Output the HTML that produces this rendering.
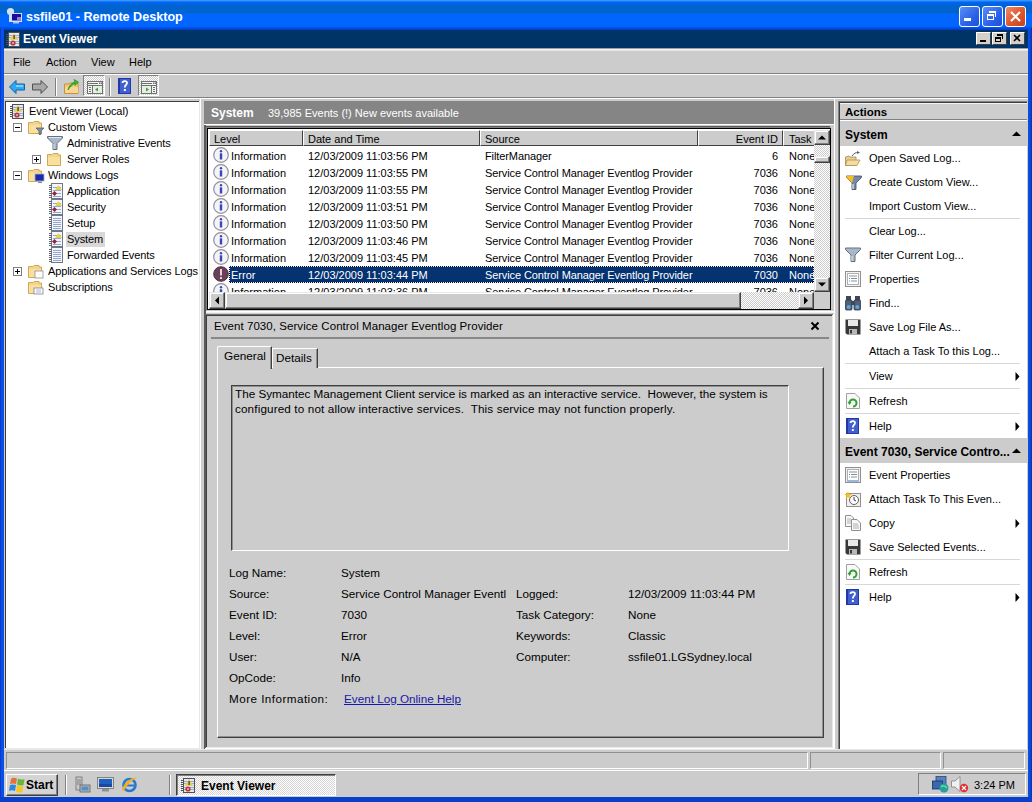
<!DOCTYPE html>
<html><head><meta charset="utf-8">
<style>
*{box-sizing:border-box;margin:0;padding:0}
html,body{width:1032px;height:802px;overflow:hidden;background:#0A4BD8;font-family:"Liberation Sans",sans-serif;font-size:11px;color:#000}
.a{position:absolute}
.t{position:absolute;white-space:pre;line-height:13px}
svg{position:absolute;overflow:visible}
.hl{position:absolute;height:1px}
.vl{position:absolute;width:1px}
</style></head><body>
<div class="a" style="left:0;top:0;width:1032px;height:802px;overflow:hidden">
<!-- XP title bar -->
<div class="a" style="left:0;top:0;width:1032px;height:30px;background:linear-gradient(#48A0FF 0,#2C8CFF 1px,#0066F4 2px,#0060E8 4px,#0064CC 6px,#0064CC 13px,#0066FF 14px,#0066FF 26px,#0050E8 28px,#0838C0 30px)"></div>
<svg style="left:0px;top:0px" width="24" height="26" viewBox="0 0 24 26">
 <circle cx="10.5" cy="11.5" r="3.6" fill="#E8F0F8" opacity=".9"/>
 <rect x="9" y="13" width="13" height="9" fill="#D0DCF4"/>
 <rect x="12" y="14" width="9" height="6.5" fill="#180C98"/>
 <rect x="17" y="17" width="4" height="3.5" fill="#9080E0"/>
 <rect x="13" y="22" width="6" height="1.5" fill="#A8C0F0"/>
</svg>
<div class="t" style="left:26px;top:10px;font-size:12.6px;font-weight:bold;color:#fff;line-height:15px;letter-spacing:0px">ssfile01 - Remote Desktop</div>
<!-- XP buttons -->
<div class="a" style="left:959px;top:6px;width:21px;height:21px;border:1px solid #fff;border-radius:3px;background:linear-gradient(135deg,#5C8EF8,#2B62E8 60%,#1C50D8)"></div>
<div class="a" style="left:964px;top:18px;width:7px;height:3px;background:#fff"></div>
<div class="a" style="left:982px;top:6px;width:21px;height:21px;border:1px solid #fff;border-radius:3px;background:linear-gradient(135deg,#5C8EF8,#2B62E8 60%,#1C50D8)"></div>
<div class="a" style="left:987px;top:14px;width:7px;height:6px;border:1px solid #fff;border-top-width:2px"></div>
<div class="a" style="left:989px;top:11px;width:7px;height:6px;border:1px solid #fff;border-top-width:2px;border-left:none;border-bottom:none"></div>
<div class="a" style="left:1005px;top:6px;width:21px;height:21px;border:1px solid #fff;border-radius:3px;background:linear-gradient(135deg,#F08A6A,#E05A30 50%,#C8401C)"></div>
<svg style="left:1005px;top:6px" width="21" height="21"><path d="M6 6 L15 15 M15 6 L6 15" stroke="#fff" stroke-width="2.2"/></svg>

<!-- frame borders -->
<div class="a" style="left:0;top:28px;width:4px;height:774px;background:linear-gradient(90deg,#0830B0,#0A50E8 30%,#0A50E8)"></div>
<div class="a" style="left:1028px;top:28px;width:4px;height:774px;background:linear-gradient(90deg,#0A50E8,#0A48D8 50%,#0830A8)"></div>
<div class="a" style="left:0;top:797px;width:1032px;height:5px;background:#0A3FCC"></div>

<!-- MDI title -->
<div class="a" style="left:4px;top:30px;width:1024px;height:18px;background:#003366"></div>
<svg style="left:5px;top:31px" width="15" height="16" viewBox="0 0 15 16">
 <rect x="3.5" y="1.5" width="11" height="14" fill="#E4E8F4" stroke="#505050" stroke-width="1"/>
 <path d="M1 3.5h3M1 5.5h3M1 7.5h3M1 9.5h3M1 11.5h3M1 13.5h3" stroke="#505050" stroke-width="1"/>
 <path d="M4 4.5h10M4 6.5h10M4 10.5h10M4 12.5h10" stroke="#98A8D0" stroke-width="1"/>
 <path d="M9 2 L13.5 9 L4.5 9 Z" fill="#E0D068"/>
 <rect x="8.5" y="4" width="1.2" height="4" fill="#303020"/>
 <circle cx="8" cy="12" r="2.6" fill="#B83838"/>
 <circle cx="8" cy="12" r="1" fill="#F0B0B0"/>
</svg>
<div class="t" style="left:23px;top:32px;font-size:12px;font-weight:bold;color:#fff;line-height:14px">Event Viewer</div>
<!-- MDI buttons -->
<div class="a" style="left:976px;top:32px;width:15px;height:13px;background:#D4D0C8;border:1px solid;border-color:#fff #404040 #404040 #fff"></div>
<div class="a" style="left:980px;top:40px;width:6px;height:2px;background:#000"></div>
<div class="a" style="left:992px;top:32px;width:15px;height:13px;background:#D4D0C8;border:1px solid;border-color:#fff #404040 #404040 #fff"></div>
<div class="a" style="left:995px;top:37px;width:6px;height:5px;border:1px solid #000;border-top-width:2px"></div>
<div class="a" style="left:997px;top:34px;width:6px;height:5px;border:1px solid #000;border-top-width:2px;border-left:none;border-bottom:none"></div>
<div class="a" style="left:1010px;top:32px;width:15px;height:13px;background:#D4D0C8;border:1px solid;border-color:#fff #404040 #404040 #fff"></div>
<svg style="left:1010px;top:32px" width="15" height="13"><path d="M4 3 L10 9 M10 3 L4 9" stroke="#000" stroke-width="1.6"/></svg>

<!-- main gray -->
<div class="a" style="left:4px;top:48px;width:1024px;height:749px;background:#CCCCCC"></div>
<div class="hl" style="left:4px;top:48px;width:1024px;background:#A0A0A0"></div>
<div class="hl" style="left:4px;top:49px;width:1024px;background:#F4F4F4"></div>
<div class="hl" style="left:4px;top:50px;width:1024px;background:#E4E4E4"></div>
<!-- menu -->
<div class="t" style="left:13px;top:56px">File</div>
<div class="t" style="left:46px;top:56px">Action</div>
<div class="t" style="left:91px;top:56px">View</div>
<div class="t" style="left:129px;top:56px">Help</div>
<div class="hl" style="left:4px;top:73px;width:1024px;background:#808080"></div>
<div class="hl" style="left:4px;top:74px;width:1024px;background:#FFFFFF"></div>
<div class="hl" style="left:4px;top:97px;width:1024px;background:#808080"></div>
<div class="hl" style="left:4px;top:98px;width:1024px;background:#FFFFFF"></div>
<!-- toolbar icons -->
<svg style="left:9px;top:80px" width="16" height="14" viewBox="0 0 16 14">
 <path d="M0.5 7 L7 0.5 L7 4 L15.5 4 L15.5 10 L7 10 L7 13.5 Z" fill="#30A8F0" stroke="#1060B0" stroke-width="1"/>
 <path d="M7 5 L14 5 L14 7 L7 7Z" fill="#80D0FF"/>
</svg>
<svg style="left:32px;top:80px" width="16" height="14" viewBox="0 0 16 14">
 <path d="M15.5 7 L9 0.5 L9 4 L0.5 4 L0.5 10 L9 10 L9 13.5 Z" fill="#A8A8A8" stroke="#505050" stroke-width="1"/>
</svg>
<div class="vl" style="left:55px;top:78px;height:18px;background:#808080"></div>
<div class="vl" style="left:56px;top:78px;height:18px;background:#fff"></div>
<svg style="left:64px;top:79px" width="15" height="15" viewBox="0 0 15 15">
 <path d="M0.5 5 L5 5 L6 4 L14 4 L14 14.5 L0.5 14.5 Z" fill="#F4C878" stroke="#C89040" stroke-width="1"/>
 <path d="M1 8 L14 8 L14 14 L1 14Z" fill="#F8D890"/>
 <path d="M4 11 C5 6 8 4 11 3 L10 0.5 L14.5 3 L11 6.5 L11 4.5 C8 5.5 6 8 4 11Z" fill="#30C030" stroke="#108010" stroke-width=".6"/>
</svg>
<!-- pressed button 1 -->
<div class="a" style="left:83px;top:75px;width:22px;height:21px;border:1px solid;border-color:#808080 #fff #fff #808080;background-color:#E8E8E8;background-image:repeating-conic-gradient(#FFFFFF 0 25%,#CCCCCC 0 50%);background-size:2px 2px"></div>
<svg style="left:87px;top:81px" width="16" height="13" viewBox="0 0 16 13">
 <rect x="0.5" y="0.5" width="15" height="12" fill="#F4F4F4" stroke="#707070"/>
 <path d="M1 2.5h10" stroke="#707070" stroke-width="1"/>
 <rect x="12" y="1.5" width="1.5" height="1.5" fill="#707070"/><rect x="14" y="1.5" width="1" height="1.5" fill="#707070"/>
 <path d="M1 4.5h14" stroke="#707070"/>
 <path d="M5.5 4.5v8" stroke="#707070"/>
 <path d="M2 6.5h2M2 8.5h2M2 10.5h2" stroke="#707070"/>
 <rect x="6" y="5" width="9" height="7" fill="#E4F0E0"/>
 <path d="M11 6.5 L8 8.5 L11 10.5Z" fill="#40A040"/>
</svg>
<div class="vl" style="left:109px;top:78px;height:18px;background:#808080"></div>
<div class="vl" style="left:110px;top:78px;height:18px;background:#fff"></div>
<svg style="left:118px;top:78px" width="13" height="16" viewBox="0 0 13 16">
 <rect x="0" y="0" width="13" height="16" fill="#2038A8"/>
 <rect x="2" y="1" width="10" height="14" fill="#4060D0"/>
 <path d="M4.5 5 C4.5 2.5 9 2.5 9 5 C9 7 6.8 7 6.8 9.5" stroke="#fff" stroke-width="1.8" fill="none"/>
 <rect x="5.9" y="11" width="1.9" height="2" fill="#fff"/>
</svg>
<div class="a" style="left:138px;top:75px;width:21px;height:21px;border:1px solid;border-color:#808080 #fff #fff #808080;background-color:#E8E8E8;background-image:repeating-conic-gradient(#FFFFFF 0 25%,#CCCCCC 0 50%);background-size:2px 2px"></div>
<svg style="left:141px;top:81px" width="16" height="13" viewBox="0 0 16 13">
 <rect x="0.5" y="0.5" width="15" height="12" fill="#F4F4F4" stroke="#707070"/>
 <path d="M1 2.5h10" stroke="#707070" stroke-width="1"/>
 <rect x="12" y="1.5" width="1.5" height="1.5" fill="#707070"/><rect x="14" y="1.5" width="1" height="1.5" fill="#707070"/>
 <path d="M1 4.5h14" stroke="#707070"/>
 <path d="M10.5 4.5v8" stroke="#707070"/>
 <path d="M12 6.5h2M12 8.5h2M12 10.5h2" stroke="#707070"/>
 <rect x="1" y="5" width="9" height="7" fill="#E4F0E0"/>
 <path d="M5 6.5 L8 8.5 L5 10.5Z" fill="#40A040"/>
</svg>
<div class="a" style="left:5px;top:101px;width:195px;height:648px;background:#fff"></div>
<div class="hl" style="left:5px;top:101px;width:195px;background:#404040"></div>
<div class="vl" style="left:5px;top:101px;height:648px;background:#404040"></div>
<div class="hl" style="left:5px;top:748px;width:195px;background:#E8E8E8"></div>
<div class="vl" style="left:199px;top:101px;height:648px;background:#E8E8E8"></div>
<svg style="left:9px;top:103px" width="15" height="16" viewBox="0 0 15 16">
 <rect x="3.5" y="1.5" width="11" height="14" fill="#E4E8F4" stroke="#505050" stroke-width="1"/>
 <path d="M1 3.5h3M1 5.5h3M1 7.5h3M1 9.5h3M1 11.5h3M1 13.5h3" stroke="#505050" stroke-width="1"/>
 <path d="M4 4.5h10M4 6.5h10M4 10.5h10M4 12.5h10" stroke="#98A8D0" stroke-width="1"/>
 <path d="M9 2 L13.5 9 L4.5 9 Z" fill="#E0D068"/>
 <rect x="8.5" y="4" width="1.2" height="4" fill="#303020"/>
 <circle cx="8" cy="12" r="2.6" fill="#B83838"/>
 <circle cx="8" cy="12" r="1" fill="#F0B0B0"/>
</svg>
<div class="t" style="left:29px;top:105px;letter-spacing:-0.1px">Event Viewer (Local)</div>
<svg style="left:28px;top:119px" width="16" height="16" viewBox="0 0 16 16">
 <path d="M0.5 3.5 L5 3.5 L6 2.5 L11 2.5 L11 4 L13.5 4 L13.5 14.5 L0.5 14.5Z" fill="#F2D690" stroke="#D0A850" stroke-width="1"/>
 <path d="M1 6 L13 6 L13 14 L1 14Z" fill="#F8E0A0"/>
 <path d="M8 9 L16 9 L13 12 L13 15.5 L11 15.5 L11 12Z" fill="#8090A8" stroke="#506078" stroke-width=".8"/>
</svg>
<div class="a" style="left:13px;top:123px;width:9px;height:9px;border:1px solid #808080;background:#fff"></div><div class="hl" style="left:15px;top:127px;width:5px;background:#000"></div>
<div class="t" style="left:48px;top:121px;letter-spacing:-0.1px">Custom Views</div>
<svg style="left:47px;top:135px" width="16" height="16" viewBox="0 0 16 16">
 <path d="M0.5 1.5 L15.5 1.5 L15.5 3 L10 8.5 L10 14.5 L6 14.5 L6 8.5 L0.5 3Z" fill="#A8B8C8" stroke="#607080" stroke-width="1"/>
 <path d="M2 2.5 L14 2.5" stroke="#E0E8F0" stroke-width="1"/>
 <path d="M7 9 L7 14" stroke="#D8E0E8" stroke-width="1"/>
</svg>
<div class="t" style="left:67px;top:137px;letter-spacing:-0.1px">Administrative Events</div>
<svg style="left:47px;top:151px" width="16" height="16" viewBox="0 0 16 16">
 <path d="M0.5 3.5 L5 3.5 L6 2.5 L11 2.5 L11 4 L13.5 4 L13.5 14.5 L0.5 14.5Z" fill="#F2D690" stroke="#D0A850" stroke-width="1"/>
 <path d="M1 6 L13 6 L13 14 L1 14Z" fill="#F8E0A0"/>
 
</svg>
<div class="a" style="left:32px;top:155px;width:9px;height:9px;border:1px solid #808080;background:#fff"></div><div class="hl" style="left:34px;top:159px;width:5px;background:#000"></div><div class="vl" style="left:36px;top:157px;height:5px;background:#000"></div>
<div class="t" style="left:67px;top:153px;letter-spacing:-0.1px">Server Roles</div>
<svg style="left:28px;top:167px" width="16" height="16" viewBox="0 0 16 16">
 <path d="M0.5 3.5 L5 3.5 L6 2.5 L11 2.5 L11 4 L13.5 4 L13.5 14.5 L0.5 14.5Z" fill="#F2D690" stroke="#D0A850" stroke-width="1"/>
 <path d="M1 6 L13 6 L13 14 L1 14Z" fill="#F8E0A0"/>
 <rect x="7" y="7" width="9" height="7" fill="#1A2AB0" stroke="#A0B0D0" stroke-width=".8"/><path d="M10 15.5h4" stroke="#8090B0"/>
</svg>
<div class="a" style="left:13px;top:171px;width:9px;height:9px;border:1px solid #808080;background:#fff"></div><div class="hl" style="left:15px;top:175px;width:5px;background:#000"></div>
<div class="t" style="left:48px;top:169px;letter-spacing:-0.1px">Windows Logs</div>
<svg style="left:48px;top:183px" width="15" height="16" viewBox="0 0 15 16">
 <rect x="3.5" y="0.5" width="11" height="15" fill="#F4F6FC" stroke="#707888" stroke-width="1"/>
 <path d="M1 2.5h3M1 4.5h3M1 6.5h3M1 8.5h3M1 10.5h3M1 12.5h3M1 14.5h3" stroke="#606070" stroke-width="1"/>
 <path d="M5 4.5h8M5 7.5h8M5 10.5h8M5 13.5h8" stroke="#90A8D0" stroke-width="1"/>
 <path d="M10.5 2 L14 7 L7 7Z" fill="#E8D050"/>
 <path d="M6.5 8 L9 10.5 L6.5 13 L4 10.5Z" fill="#902838"/>
</svg>
<div class="t" style="left:67px;top:185px;letter-spacing:-0.1px">Application</div>
<svg style="left:48px;top:199px" width="15" height="16" viewBox="0 0 15 16">
 <rect x="3.5" y="0.5" width="11" height="15" fill="#F4F6FC" stroke="#707888" stroke-width="1"/>
 <path d="M1 2.5h3M1 4.5h3M1 6.5h3M1 8.5h3M1 10.5h3M1 12.5h3M1 14.5h3" stroke="#606070" stroke-width="1"/>
 <path d="M5 4.5h8M5 7.5h8M5 10.5h8M5 13.5h8" stroke="#90A8D0" stroke-width="1"/>
 <path d="M10.5 2 L14 7 L7 7Z" fill="#E8D050"/>
 <path d="M6.5 8 L9 10.5 L6.5 13 L4 10.5Z" fill="#902838"/>
</svg>
<div class="t" style="left:67px;top:201px;letter-spacing:-0.1px">Security</div>
<svg style="left:48px;top:215px" width="15" height="16" viewBox="0 0 15 16">
 <rect x="3.5" y="0.5" width="11" height="15" fill="#F4F6FC" stroke="#707888" stroke-width="1"/>
 <path d="M1 2.5h3M1 4.5h3M1 6.5h3M1 8.5h3M1 10.5h3M1 12.5h3M1 14.5h3" stroke="#606070" stroke-width="1"/>
 <path d="M5 3.5h8M5 5.5h8M5 7.5h8M5 9.5h8M5 11.5h8M5 13.5h8" stroke="#90A8D0" stroke-width="1"/>
</svg>
<div class="t" style="left:67px;top:217px;letter-spacing:-0.1px">Setup</div>
<div class="a" style="left:66px;top:232px;width:39px;height:15px;background:#D8D8D8"></div>
<svg style="left:48px;top:231px" width="15" height="16" viewBox="0 0 15 16">
 <rect x="3.5" y="0.5" width="11" height="15" fill="#F4F6FC" stroke="#707888" stroke-width="1"/>
 <path d="M1 2.5h3M1 4.5h3M1 6.5h3M1 8.5h3M1 10.5h3M1 12.5h3M1 14.5h3" stroke="#606070" stroke-width="1"/>
 <path d="M5 4.5h8M5 7.5h8M5 10.5h8M5 13.5h8" stroke="#90A8D0" stroke-width="1"/>
 <path d="M10.5 2 L14 7 L7 7Z" fill="#E8D050"/>
 <path d="M6.5 8 L9 10.5 L6.5 13 L4 10.5Z" fill="#902838"/>
</svg>
<div class="t" style="left:67px;top:233px;letter-spacing:-0.1px">System</div>
<svg style="left:48px;top:247px" width="15" height="16" viewBox="0 0 15 16">
 <rect x="3.5" y="0.5" width="11" height="15" fill="#F4F6FC" stroke="#707888" stroke-width="1"/>
 <path d="M1 2.5h3M1 4.5h3M1 6.5h3M1 8.5h3M1 10.5h3M1 12.5h3M1 14.5h3" stroke="#606070" stroke-width="1"/>
 <path d="M5 3.5h8M5 5.5h8M5 7.5h8M5 9.5h8M5 11.5h8M5 13.5h8" stroke="#90A8D0" stroke-width="1"/>
</svg>
<div class="t" style="left:67px;top:249px;letter-spacing:-0.1px">Forwarded Events</div>
<svg style="left:28px;top:263px" width="16" height="16" viewBox="0 0 16 16">
 <path d="M0.5 3.5 L5 3.5 L6 2.5 L11 2.5 L11 4 L13.5 4 L13.5 14.5 L0.5 14.5Z" fill="#F2D690" stroke="#D0A850" stroke-width="1"/>
 <path d="M1 6 L13 6 L13 14 L1 14Z" fill="#F8E0A0"/>
 <rect x="7" y="8" width="8" height="7" fill="#fff" stroke="#909090" stroke-width=".8"/>
</svg>
<div class="a" style="left:13px;top:267px;width:9px;height:9px;border:1px solid #808080;background:#fff"></div><div class="hl" style="left:15px;top:271px;width:5px;background:#000"></div><div class="vl" style="left:17px;top:269px;height:5px;background:#000"></div>
<div class="t" style="left:48px;top:265px;letter-spacing:-0.1px">Applications and Services Logs</div>
<svg style="left:28px;top:279px" width="16" height="16" viewBox="0 0 16 16">
 <path d="M0.5 3.5 L5 3.5 L6 2.5 L11 2.5 L11 4 L13.5 4 L13.5 14.5 L0.5 14.5Z" fill="#F2D690" stroke="#D0A850" stroke-width="1"/>
 <path d="M1 6 L13 6 L13 14 L1 14Z" fill="#F8E0A0"/>
 <rect x="6" y="9" width="9" height="6" fill="#fff" stroke="#8080A0" stroke-width=".8"/><path d="M8 11h5M8 13h5" stroke="#8080A0" stroke-width=".6"/>
</svg>
<div class="t" style="left:48px;top:281px;letter-spacing:-0.1px">Subscriptions</div>
<div class="vl" style="left:200px;top:99px;height:650px;background:#FFFFFF"></div>
<div class="a" style="left:204px;top:101px;width:630px;height:23px;background:#858585"></div>
<div class="t" style="left:211px;top:107px;font-size:12px;font-weight:bold;color:#fff;line-height:13px">System</div>
<div class="t" style="left:268px;top:107px;color:#fff">39,985 Events (!) New events available</div>
<div class="hl" style="left:204px;top:124px;width:630px;background:#FFFFFF"></div>
<div class="a" style="left:206px;top:127px;width:625px;height:184px;border:1px solid;border-color:#808080 transparent transparent #808080"></div>
<div class="a" style="left:207px;top:128px;width:624px;height:182px;background:#fff;border:1px solid #000"></div>
<div class="a" style="left:209px;top:130px;width:94px;height:16px;background:#CCCCCC;border:1px solid;border-color:#fff #404040 #404040 #fff;overflow:hidden"></div>
<div class="t" style="left:214px;top:133px;max-width:88px;overflow:hidden">Level</div>
<div class="a" style="left:303px;top:130px;width:177px;height:16px;background:#CCCCCC;border:1px solid;border-color:#fff #404040 #404040 #fff;overflow:hidden"></div>
<div class="t" style="left:308px;top:133px;max-width:171px;overflow:hidden">Date and Time</div>
<div class="a" style="left:480px;top:130px;width:218px;height:16px;background:#CCCCCC;border:1px solid;border-color:#fff #404040 #404040 #fff;overflow:hidden"></div>
<div class="t" style="left:485px;top:133px;max-width:212px;overflow:hidden">Source</div>
<div class="a" style="left:698px;top:130px;width:85px;height:16px;background:#CCCCCC;border:1px solid;border-color:#fff #404040 #404040 #fff;overflow:hidden"></div>
<div class="t" style="left:698px;top:133px;width:80px;text-align:right">Event ID</div>
<div class="a" style="left:783px;top:130px;width:32px;height:16px;background:#CCCCCC;border:1px solid;border-color:#fff #404040 #404040 #fff;overflow:hidden"></div>
<div class="t" style="left:789px;top:133px;max-width:25px;overflow:hidden">Task</div>
<div class="a" style="left:209px;top:147px;width:605px;height:145px;overflow:hidden">
<svg style="left:4px;top:0px" width="16" height="16" viewBox="0 0 16 16">
 <circle cx="8" cy="8" r="7.3" fill="#F4F4F8" stroke="#909098" stroke-width="1.2"/>
 <circle cx="8" cy="4.3" r="1.2" fill="#3848B0"/>
 <rect x="6.8" y="6.3" width="2.4" height="6.2" fill="#3848B0"/>
</svg>
<div class="t" style="left:22px;top:3px;color:#000">Information</div>
<div class="t" style="left:99px;top:3px;color:#000">12/03/2009 11:03:56 PM</div>
<div class="t" style="left:276px;top:3px;color:#000;letter-spacing:-0.1px">FilterManager</div>
<div class="t" style="left:489px;top:3px;width:80px;text-align:right;color:#000">6</div>
<div class="t" style="left:580px;top:3px;width:25px;overflow:hidden;color:#000">None</div>
<svg style="left:4px;top:17px" width="16" height="16" viewBox="0 0 16 16">
 <circle cx="8" cy="8" r="7.3" fill="#F4F4F8" stroke="#909098" stroke-width="1.2"/>
 <circle cx="8" cy="4.3" r="1.2" fill="#3848B0"/>
 <rect x="6.8" y="6.3" width="2.4" height="6.2" fill="#3848B0"/>
</svg>
<div class="t" style="left:22px;top:20px;color:#000">Information</div>
<div class="t" style="left:99px;top:20px;color:#000">12/03/2009 11:03:55 PM</div>
<div class="t" style="left:276px;top:20px;color:#000;letter-spacing:-0.1px">Service Control Manager Eventlog Provider</div>
<div class="t" style="left:489px;top:20px;width:80px;text-align:right;color:#000">7036</div>
<div class="t" style="left:580px;top:20px;width:25px;overflow:hidden;color:#000">None</div>
<svg style="left:4px;top:34px" width="16" height="16" viewBox="0 0 16 16">
 <circle cx="8" cy="8" r="7.3" fill="#F4F4F8" stroke="#909098" stroke-width="1.2"/>
 <circle cx="8" cy="4.3" r="1.2" fill="#3848B0"/>
 <rect x="6.8" y="6.3" width="2.4" height="6.2" fill="#3848B0"/>
</svg>
<div class="t" style="left:22px;top:37px;color:#000">Information</div>
<div class="t" style="left:99px;top:37px;color:#000">12/03/2009 11:03:55 PM</div>
<div class="t" style="left:276px;top:37px;color:#000;letter-spacing:-0.1px">Service Control Manager Eventlog Provider</div>
<div class="t" style="left:489px;top:37px;width:80px;text-align:right;color:#000">7036</div>
<div class="t" style="left:580px;top:37px;width:25px;overflow:hidden;color:#000">None</div>
<svg style="left:4px;top:51px" width="16" height="16" viewBox="0 0 16 16">
 <circle cx="8" cy="8" r="7.3" fill="#F4F4F8" stroke="#909098" stroke-width="1.2"/>
 <circle cx="8" cy="4.3" r="1.2" fill="#3848B0"/>
 <rect x="6.8" y="6.3" width="2.4" height="6.2" fill="#3848B0"/>
</svg>
<div class="t" style="left:22px;top:54px;color:#000">Information</div>
<div class="t" style="left:99px;top:54px;color:#000">12/03/2009 11:03:51 PM</div>
<div class="t" style="left:276px;top:54px;color:#000;letter-spacing:-0.1px">Service Control Manager Eventlog Provider</div>
<div class="t" style="left:489px;top:54px;width:80px;text-align:right;color:#000">7036</div>
<div class="t" style="left:580px;top:54px;width:25px;overflow:hidden;color:#000">None</div>
<svg style="left:4px;top:68px" width="16" height="16" viewBox="0 0 16 16">
 <circle cx="8" cy="8" r="7.3" fill="#F4F4F8" stroke="#909098" stroke-width="1.2"/>
 <circle cx="8" cy="4.3" r="1.2" fill="#3848B0"/>
 <rect x="6.8" y="6.3" width="2.4" height="6.2" fill="#3848B0"/>
</svg>
<div class="t" style="left:22px;top:71px;color:#000">Information</div>
<div class="t" style="left:99px;top:71px;color:#000">12/03/2009 11:03:50 PM</div>
<div class="t" style="left:276px;top:71px;color:#000;letter-spacing:-0.1px">Service Control Manager Eventlog Provider</div>
<div class="t" style="left:489px;top:71px;width:80px;text-align:right;color:#000">7036</div>
<div class="t" style="left:580px;top:71px;width:25px;overflow:hidden;color:#000">None</div>
<svg style="left:4px;top:85px" width="16" height="16" viewBox="0 0 16 16">
 <circle cx="8" cy="8" r="7.3" fill="#F4F4F8" stroke="#909098" stroke-width="1.2"/>
 <circle cx="8" cy="4.3" r="1.2" fill="#3848B0"/>
 <rect x="6.8" y="6.3" width="2.4" height="6.2" fill="#3848B0"/>
</svg>
<div class="t" style="left:22px;top:88px;color:#000">Information</div>
<div class="t" style="left:99px;top:88px;color:#000">12/03/2009 11:03:46 PM</div>
<div class="t" style="left:276px;top:88px;color:#000;letter-spacing:-0.1px">Service Control Manager Eventlog Provider</div>
<div class="t" style="left:489px;top:88px;width:80px;text-align:right;color:#000">7036</div>
<div class="t" style="left:580px;top:88px;width:25px;overflow:hidden;color:#000">None</div>
<svg style="left:4px;top:102px" width="16" height="16" viewBox="0 0 16 16">
 <circle cx="8" cy="8" r="7.3" fill="#F4F4F8" stroke="#909098" stroke-width="1.2"/>
 <circle cx="8" cy="4.3" r="1.2" fill="#3848B0"/>
 <rect x="6.8" y="6.3" width="2.4" height="6.2" fill="#3848B0"/>
</svg>
<div class="t" style="left:22px;top:105px;color:#000">Information</div>
<div class="t" style="left:99px;top:105px;color:#000">12/03/2009 11:03:45 PM</div>
<div class="t" style="left:276px;top:105px;color:#000;letter-spacing:-0.1px">Service Control Manager Eventlog Provider</div>
<div class="t" style="left:489px;top:105px;width:80px;text-align:right;color:#000">7036</div>
<div class="t" style="left:580px;top:105px;width:25px;overflow:hidden;color:#000">None</div>
<div class="a" style="left:20px;top:119px;width:585px;height:17px;background:#053372;border:1px solid #000A28"></div>
<div class="a" style="left:20px;top:119px;width:585px;height:17px;border:1px dotted #F0F0F0"></div>
<svg style="left:4px;top:119px" width="16" height="16" viewBox="0 0 16 16">
 <circle cx="8" cy="8" r="7.3" fill="#684058" stroke="#503040" stroke-width="1"/>
 <rect x="7" y="3" width="2" height="6.5" fill="#F0D0D8"/>
 <rect x="7" y="11" width="2" height="2" fill="#F0D0D8"/>
</svg>
<div class="t" style="left:22px;top:122px;color:#fff">Error</div>
<div class="t" style="left:99px;top:122px;color:#fff">12/03/2009 11:03:44 PM</div>
<div class="t" style="left:276px;top:122px;color:#fff;letter-spacing:-0.1px">Service Control Manager Eventlog Provider</div>
<div class="t" style="left:489px;top:122px;width:80px;text-align:right;color:#fff">7030</div>
<div class="t" style="left:580px;top:122px;width:25px;overflow:hidden;color:#fff">None</div>
<svg style="left:4px;top:136px" width="16" height="16" viewBox="0 0 16 16">
 <circle cx="8" cy="8" r="7.3" fill="#F4F4F8" stroke="#909098" stroke-width="1.2"/>
 <circle cx="8" cy="4.3" r="1.2" fill="#3848B0"/>
 <rect x="6.8" y="6.3" width="2.4" height="6.2" fill="#3848B0"/>
</svg>
<div class="t" style="left:22px;top:139px;color:#000">Information</div>
<div class="t" style="left:99px;top:139px;color:#000">12/03/2009 11:03:36 PM</div>
<div class="t" style="left:276px;top:139px;color:#000;letter-spacing:-0.1px">Service Control Manager Eventlog Provider</div>
<div class="t" style="left:489px;top:139px;width:80px;text-align:right;color:#000">7036</div>
<div class="t" style="left:580px;top:139px;width:25px;overflow:hidden;color:#000">None</div>
</div>
<div class="a" style="left:814px;top:130px;width:16px;height:162px;background-color:#E8E8E8;background-image:repeating-conic-gradient(#FFFFFF 0 25%,#CCCCCC 0 50%);background-size:2px 2px"></div>
<div class="a" style="left:814px;top:130px;width:16px;height:15px;background:#CCCCCC;border:1px solid;border-color:#E8E8E8 #404040 #404040 #E8E8E8;box-shadow:inset -1px -1px 0 #808080,inset 1px 1px 0 #fff"></div>
<svg style="left:814px;top:130px" width="16" height="15"><path d="M4 9.5 L12 9.5 L8 5.5Z" fill="#000"/></svg>
<div class="a" style="left:814px;top:156px;width:16px;height:7px;background:#CCCCCC;border:1px solid;border-color:#E8E8E8 #404040 #404040 #E8E8E8;box-shadow:inset -1px -1px 0 #808080,inset 1px 1px 0 #fff"></div>
<div class="a" style="left:814px;top:277px;width:16px;height:15px;background:#CCCCCC;border:1px solid;border-color:#E8E8E8 #404040 #404040 #E8E8E8;box-shadow:inset -1px -1px 0 #808080,inset 1px 1px 0 #fff"></div>
<svg style="left:814px;top:277px" width="16" height="15"><path d="M4 5.5 L12 5.5 L8 9.5Z" fill="#000"/></svg>
<div class="a" style="left:209px;top:292px;width:605px;height:17px;background-color:#E8E8E8;background-image:repeating-conic-gradient(#FFFFFF 0 25%,#CCCCCC 0 50%);background-size:2px 2px"></div>
<div class="a" style="left:209px;top:292px;width:16px;height:17px;background:#CCCCCC;border:1px solid;border-color:#E8E8E8 #404040 #404040 #E8E8E8;box-shadow:inset -1px -1px 0 #808080,inset 1px 1px 0 #fff"></div>
<svg style="left:209px;top:292px" width="16" height="17"><path d="M10 4.5 L10 12.5 L6 8.5Z" fill="#000"/></svg>
<div class="a" style="left:225px;top:292px;width:516px;height:17px;background:#CCCCCC;border:1px solid;border-color:#E8E8E8 #404040 #404040 #E8E8E8;box-shadow:inset -1px -1px 0 #808080,inset 1px 1px 0 #fff"></div>
<div class="a" style="left:798px;top:292px;width:16px;height:17px;background:#CCCCCC;border:1px solid;border-color:#E8E8E8 #404040 #404040 #E8E8E8;box-shadow:inset -1px -1px 0 #808080,inset 1px 1px 0 #fff"></div>
<svg style="left:798px;top:292px" width="16" height="17"><path d="M6 4.5 L6 12.5 L10 8.5Z" fill="#000"/></svg>
<div class="a" style="left:814px;top:292px;width:16px;height:17px;background:#CCCCCC"></div>
<div class="hl" style="left:205px;top:311px;width:629px;background:#FFFFFF"></div>
<div class="hl" style="left:205px;top:312px;width:629px;background:#F0F0F0"></div>
<div class="vl" style="left:204px;top:125px;height:624px;background:#5A5A5A"></div>
<div class="vl" style="left:205px;top:125px;height:623px;background:#5A5A5A"></div>
<div class="hl" style="left:204px;top:126px;width:626px;background:#5A5A5A"></div>
<div class="hl" style="left:205px;top:314px;width:628px;background:#707070"></div>
<div class="hl" style="left:206px;top:315px;width:627px;background:#404040"></div>
<div class="vl" style="left:206px;top:315px;height:432px;background:#404040"></div>
<div class="vl" style="left:833px;top:314px;height:435px;background:#FFFFFF"></div>
<div class="hl" style="left:205px;top:748px;width:629px;background:#FFFFFF"></div>
<div class="vl" style="left:832px;top:315px;height:433px;background:#E8E8E8"></div>
<div class="hl" style="left:206px;top:747px;width:627px;background:#E8E8E8"></div>
<div class="t" style="left:214px;top:320px;font-size:11.5px;line-height:13px;letter-spacing:0.06px">Event 7030, Service Control Manager Eventlog Provider</div>
<svg style="left:810px;top:321px" width="10" height="10"><path d="M1.5 1.5 L8.5 8.5 M8.5 1.5 L1.5 8.5" stroke="#000" stroke-width="2"/></svg>
<div class="hl" style="left:211px;top:337px;width:618px;height:2px;background:#888888"></div>
<div class="a" style="left:217px;top:367px;width:607px;height:371px;border:1px solid;border-color:#fff #404040 #404040 #fff;box-shadow:inset -1px -1px 0 #909090"></div>
<div class="a" style="left:272px;top:348px;width:46px;height:20px;background:#CCCCCC;border:1px solid;border-color:#fff #404040 transparent #fff;border-bottom:none;box-shadow:inset -1px 0 0 #909090"></div>
<div class="t" style="left:276px;top:351px;font-size:11.7px">Details</div>
<div class="a" style="left:217px;top:346px;width:55px;height:23px;background:#CCCCCC;border:1px solid;border-color:#fff #404040 transparent #fff;border-bottom:none;border-top-left-radius:2px;box-shadow:inset -1px 0 0 #909090"></div>
<div class="t" style="left:224px;top:350px;font-size:11.8px;letter-spacing:0px">General</div>
<div class="a" style="left:231px;top:385px;width:558px;height:166px;border:1px solid;border-color:#404040 #fff #fff #404040;box-shadow:inset 1px 1px 0 #909090"></div>
<div class="t" style="left:235px;top:386px;font-size:11.7px;line-height:15px;letter-spacing:0px">The Symantec Management Client service is marked as an interactive service.  However, the system is</div>
<div class="t" style="left:235px;top:401px;font-size:11.7px;line-height:15px;letter-spacing:0.14px">configured to not allow interactive services.  This service may not function properly.</div>
<div class="t" style="left:229px;top:566px;font-size:11.7px;letter-spacing:0">Log Name:</div>
<div class="t" style="left:341px;top:566px;font-size:11.7px">System</div>
<div class="t" style="left:229px;top:587px;font-size:11.7px;letter-spacing:0">Source:</div>
<div class="t" style="left:341px;top:587px;font-size:11.7px">Service Control Manager Eventl</div>
<div class="t" style="left:516px;top:587px;font-size:11.7px">Logged:</div>
<div class="t" style="left:628px;top:587px;font-size:11.7px">12/03/2009 11:03:44 PM</div>
<div class="t" style="left:229px;top:608px;font-size:11.7px;letter-spacing:0">Event ID:</div>
<div class="t" style="left:341px;top:608px;font-size:11.7px">7030</div>
<div class="t" style="left:516px;top:608px;font-size:11.7px">Task Category:</div>
<div class="t" style="left:628px;top:608px;font-size:11.7px">None</div>
<div class="t" style="left:229px;top:629px;font-size:11.7px;letter-spacing:0">Level:</div>
<div class="t" style="left:341px;top:629px;font-size:11.7px">Error</div>
<div class="t" style="left:516px;top:629px;font-size:11.7px">Keywords:</div>
<div class="t" style="left:628px;top:629px;font-size:11.7px">Classic</div>
<div class="t" style="left:229px;top:650px;font-size:11.7px;letter-spacing:0">User:</div>
<div class="t" style="left:341px;top:650px;font-size:11.7px">N/A</div>
<div class="t" style="left:516px;top:650px;font-size:11.7px">Computer:</div>
<div class="t" style="left:628px;top:650px;font-size:11.7px">ssfile01.LGSydney.local</div>
<div class="t" style="left:229px;top:671px;font-size:11.7px;letter-spacing:0">OpCode:</div>
<div class="t" style="left:341px;top:671px;font-size:11.7px">Info</div>
<div class="t" style="left:229px;top:692px;font-size:11.7px;letter-spacing:0.45px">More Information:</div>
<div class="t" style="left:344px;top:692px;font-size:11.7px;color:#1818A8;text-decoration:underline">Event Log Online Help</div>
<div class="vl" style="left:834px;top:99px;height:650px;background:#FFFFFF"></div>
<div class="a" style="left:838px;top:101px;width:189px;height:648px;background:#fff"></div>
<div class="vl" style="left:838px;top:101px;height:648px;background:#808080"></div>
<div class="vl" style="left:839px;top:102px;height:647px;background:#404040"></div>
<div class="hl" style="left:838px;top:101px;width:189px;background:#808080"></div>
<div class="hl" style="left:839px;top:102px;width:188px;background:#404040"></div>
<div class="a" style="left:840px;top:103px;width:187px;height:17px;background:#CECECE;border-top:1px solid #F4F4F4;border-bottom:1px solid #808080"></div>
<div class="t" style="left:845px;top:106px;font-size:11.5px;font-weight:bold">Actions</div>
<div class="hl" style="left:840px;top:120px;width:187px;background:#FFFFFF"></div>
<div class="a" style="left:840px;top:121px;width:187px;height:25px;background:#CCCCCC"></div>
<div class="t" style="left:845px;top:129px;font-size:12px;font-weight:bold">System</div>
<svg style="left:1012px;top:131px" width="9" height="6"><path d="M0 5 L9 5 L4.5 0.5Z" fill="#000"/></svg>
<div class="a" style="left:840px;top:438px;width:187px;height:25px;background:#CCCCCC"></div>
<div class="t" style="left:845px;top:446px;font-size:12px;font-weight:bold">Event 7030, Service Contro...</div>
<svg style="left:1012px;top:448px" width="9" height="6"><path d="M0 5 L9 5 L4.5 0.5Z" fill="#000"/></svg>
<svg style="left:845px;top:151px" width="16" height="16" viewBox="0 0 16 16"><path d="M0.5 6 L4 5 L5 6 L11 6 L11 14.5 L0.5 14.5Z" fill="#E8CF90" stroke="#A88850" stroke-width=".8"/><path d="M2 9 L15 9 L12 14.5 L0.5 14.5Z" fill="#F4DCA0" stroke="#B09050" stroke-width=".8"/><path d="M7 5 C9 2 11 1.5 13 1.5" stroke="#506070" stroke-width="1" fill="none"/><path d="M12 0 L15 1.5 L12 3Z" fill="#506070"/></svg>
<div class="t" style="left:869px;top:152px">Open Saved Log...</div>
<svg style="left:846px;top:175px" width="16" height="16" viewBox="0 0 16 16"><path d="M0.5 1 L15.5 1 L15.5 2.5 L10 8 L10 14.5 L6 14.5 L6 8 L0.5 2.5Z" fill="#7888A8" stroke="#404860" stroke-width=".8"/><path d="M0.5 1 L8 1 L6 8 L0.5 2.5Z" fill="#F0C020"/><path d="M7 9 L7 14" stroke="#fff" stroke-width="1"/></svg>
<div class="t" style="left:869px;top:176px">Create Custom View...</div>
<div class="t" style="left:869px;top:200px">Import Custom View...</div>
<div class="t" style="left:869px;top:225px">Clear Log...</div>
<svg style="left:845px;top:247px" width="16" height="16" viewBox="0 0 16 16"><path d="M0.5 1 L15.5 1 L15.5 2.5 L10 8 L10 14.5 L6 14.5 L6 8 L0.5 2.5Z" fill="#A8B8C8" stroke="#607080" stroke-width="1"/><path d="M7 9 L7 14" stroke="#E0E8F0" stroke-width="1"/></svg>
<div class="t" style="left:869px;top:249px">Filter Current Log...</div>
<svg style="left:845px;top:271px" width="16" height="16" viewBox="0 0 16 16"><rect x="0.5" y="0.5" width="15" height="15" fill="#F4F4F4" stroke="#909090"/><rect x="2.5" y="2.5" width="11" height="11" fill="#fff" stroke="#B0B0B0"/><path d="M4 5h8M6 7.5h6M6 10h6" stroke="#8090A0"/><path d="M4 7.5h1M4 10h1" stroke="#8090A0"/></svg>
<div class="t" style="left:869px;top:273px">Properties</div>
<svg style="left:845px;top:295px" width="16" height="16" viewBox="0 0 16 16"><rect x="1" y="1" width="5" height="5" fill="#404858"/><rect x="10" y="1" width="5" height="5" fill="#404858"/><rect x="0.5" y="5" width="6.5" height="10" rx="1" fill="#506078" stroke="#303848" stroke-width=".8"/><rect x="9" y="5" width="6.5" height="10" rx="1" fill="#506078" stroke="#303848" stroke-width=".8"/><rect x="6" y="6" width="4" height="4" fill="#404858"/><circle cx="3.7" cy="12" r="2" fill="#58A8E0"/><circle cx="12.3" cy="12" r="2" fill="#58A8E0"/></svg>
<div class="t" style="left:869px;top:297px">Find...</div>
<svg style="left:845px;top:319px" width="16" height="16" viewBox="0 0 16 16"><path d="M0.5 0.5 L15.5 0.5 L15.5 15.5 L2 15.5 L0.5 14Z" fill="#383838"/><rect x="3" y="1" width="10" height="6" fill="#E8E8E8"/><rect x="4" y="10" width="8" height="5.5" fill="#B8B8B8"/><rect x="5" y="11" width="2" height="3.5" fill="#383838"/></svg>
<div class="t" style="left:869px;top:321px">Save Log File As...</div>
<div class="t" style="left:869px;top:345px">Attach a Task To this Log...</div>
<div class="t" style="left:869px;top:370px">View</div>
<svg style="left:846px;top:393px" width="14" height="16" viewBox="0 0 14 16"><path d="M0.5 0.5 L9 0.5 L13.5 5 L13.5 15.5 L0.5 15.5Z" fill="#F8F8F8" stroke="#A0A0A0"/><path d="M3.5 10 A3.5 3.5 0 1 1 7 13.5" stroke="#30A030" stroke-width="2" fill="none"/><path d="M1.5 9 L5.5 9 L3.5 12Z" fill="#30A030"/></svg>
<div class="t" style="left:869px;top:395px">Refresh</div>
<svg style="left:846px;top:418px" width="13" height="16" viewBox="0 0 13 16"><rect x="0" y="0" width="13" height="16" fill="#2038A8"/><rect x="2" y="1" width="10" height="14" fill="#4060D0"/><path d="M4.5 5 C4.5 2.5 9 2.5 9 5 C9 7 6.8 7 6.8 9.5" stroke="#fff" stroke-width="1.8" fill="none"/><rect x="5.9" y="11" width="1.9" height="2" fill="#fff"/></svg>
<div class="t" style="left:869px;top:420px">Help</div>
<div class="hl" style="left:845px;top:218px;width:175px;background:#D8D8D8"></div>
<div class="hl" style="left:845px;top:363px;width:175px;background:#D8D8D8"></div>
<div class="hl" style="left:845px;top:388px;width:175px;background:#D8D8D8"></div>
<div class="hl" style="left:845px;top:413px;width:175px;background:#D8D8D8"></div>
<svg style="left:1015px;top:372px" width="5" height="9"><path d="M0.5 0 L4.5 4.5 L0.5 9Z" fill="#000"/></svg>
<svg style="left:1015px;top:422px" width="5" height="9"><path d="M0.5 0 L4.5 4.5 L0.5 9Z" fill="#000"/></svg>
<svg style="left:845px;top:467px" width="16" height="16" viewBox="0 0 16 16"><rect x="0.5" y="0.5" width="15" height="15" fill="#F0F0F0" stroke="#909090"/><rect x="2.5" y="2.5" width="11" height="11" fill="#fff" stroke="#B0B0B0"/><path d="M4 5h8M6 7.5h6M6 10h6" stroke="#8090A0"/><path d="M4 7.5h1M4 10h1" stroke="#8090A0"/><rect x="2" y="13" width="12" height="2" fill="#A0B8D8"/></svg>
<div class="t" style="left:869px;top:469px">Event Properties</div>
<svg style="left:845px;top:491px" width="16" height="16" viewBox="0 0 16 16"><rect x="1.5" y="2.5" width="14" height="13" fill="#F0F0F0" stroke="#909090"/><circle cx="9" cy="9" r="4.5" fill="#fff" stroke="#606060"/><path d="M9 6 L9 9 L11 10" stroke="#404040" fill="none"/><path d="M3 0 L4 3 L7 3 L4.5 5 L5.5 8 L3 6 L0.5 8 L1.5 5 L-1 3 L2 3Z" fill="#F0C020"/></svg>
<div class="t" style="left:869px;top:493px">Attach Task To This Even...</div>
<svg style="left:845px;top:515px" width="16" height="16" viewBox="0 0 16 16"><path d="M0.5 0.5 L6 0.5 L8.5 3 L8.5 11.5 L0.5 11.5Z" fill="#F8F8F8" stroke="#909090"/><path d="M6.5 4.5 L12 4.5 L15.5 8 L15.5 15.5 L6.5 15.5Z" fill="#F8F8F8" stroke="#909090"/><path d="M2 4h4M2 6h5M2 8h5M8 9h5M8 11h6M8 13h6" stroke="#A0A0A0" stroke-width=".8"/></svg>
<div class="t" style="left:869px;top:517px">Copy</div>
<svg style="left:845px;top:539px" width="16" height="16" viewBox="0 0 16 16"><path d="M0.5 0.5 L15.5 0.5 L15.5 15.5 L2 15.5 L0.5 14Z" fill="#383838"/><rect x="3" y="1" width="10" height="6" fill="#E8E8E8"/><rect x="4" y="10" width="8" height="5.5" fill="#B8B8B8"/><rect x="5" y="11" width="2" height="3.5" fill="#383838"/></svg>
<div class="t" style="left:869px;top:541px">Save Selected Events...</div>
<svg style="left:846px;top:564px" width="14" height="16" viewBox="0 0 14 16"><path d="M0.5 0.5 L9 0.5 L13.5 5 L13.5 15.5 L0.5 15.5Z" fill="#F8F8F8" stroke="#A0A0A0"/><path d="M3.5 10 A3.5 3.5 0 1 1 7 13.5" stroke="#30A030" stroke-width="2" fill="none"/><path d="M1.5 9 L5.5 9 L3.5 12Z" fill="#30A030"/></svg>
<div class="t" style="left:869px;top:566px">Refresh</div>
<svg style="left:846px;top:589px" width="13" height="16" viewBox="0 0 13 16"><rect x="0" y="0" width="13" height="16" fill="#2038A8"/><rect x="2" y="1" width="10" height="14" fill="#4060D0"/><path d="M4.5 5 C4.5 2.5 9 2.5 9 5 C9 7 6.8 7 6.8 9.5" stroke="#fff" stroke-width="1.8" fill="none"/><rect x="5.9" y="11" width="1.9" height="2" fill="#fff"/></svg>
<div class="t" style="left:869px;top:591px">Help</div>
<div class="hl" style="left:845px;top:559px;width:175px;background:#D8D8D8"></div>
<div class="hl" style="left:845px;top:584px;width:175px;background:#D8D8D8"></div>
<svg style="left:1015px;top:519px" width="5" height="9"><path d="M0.5 0 L4.5 4.5 L0.5 9Z" fill="#000"/></svg>
<svg style="left:1015px;top:593px" width="5" height="9"><path d="M0.5 0 L4.5 4.5 L0.5 9Z" fill="#000"/></svg>
<!-- status bar -->
<div class="hl" style="left:4px;top:749px;width:1024px;background:#E8E8E8"></div>
<div class="a" style="left:6px;top:752px;width:802px;height:17px;border:1px solid;border-color:#909090 #fff #fff #909090"></div>
<div class="a" style="left:810px;top:752px;width:131px;height:17px;border:1px solid;border-color:#909090 #fff #fff #909090"></div>
<div class="a" style="left:943px;top:752px;width:82px;height:17px;border:1px solid;border-color:#909090 #fff #fff #909090"></div>
<!-- taskbar -->
<div class="hl" style="left:4px;top:770px;width:1024px;background:#FFFFFF"></div>
<div class="a" style="left:6px;top:774px;width:52px;height:22px;background:#D4D4D4;border:1px solid;border-color:#fff #404040 #404040 #fff;box-shadow:inset -1px -1px 0 #808080"></div>
<svg style="left:9px;top:777px" width="17" height="16" viewBox="0 0 17 16">
 <path d="M2 2 C4 0 6 1 8 1.5 L7 7 C5 6.5 3 6 1 7Z" fill="#E8703A"/>
 <path d="M9 1.8 C11 2.5 13 3 15.5 2 L14.5 8 C12 9 10 8.5 8 7.5Z" fill="#68B838"/>
 <path d="M1 8 C3 7 5 7.5 7 8 L6 14 C4 13 2 13 0 14Z" fill="#2A88E0"/>
 <path d="M8 8.5 C10 9.5 12 10 14.3 9 L13.3 15 C11 16 9 15.5 7 14.5Z" fill="#F8C818"/>
</svg>
<div class="t" style="left:26px;top:779px;font-size:12px;font-weight:bold;line-height:13px">Start</div>
<div class="vl" style="left:65px;top:775px;height:20px;background:#808080"></div>
<div class="vl" style="left:66px;top:775px;height:20px;background:#fff"></div>
<svg style="left:74px;top:776px" width="17" height="17" viewBox="0 0 17 17">
 <rect x="2" y="1" width="6" height="13" fill="#C8C8C8" stroke="#707070" stroke-width=".8"/>
 <path d="M3 4h4M3 6h4M3 8h4" stroke="#505050" stroke-width=".6"/>
 <rect x="6" y="9" width="10" height="7" fill="#B8B8B8" stroke="#606060" stroke-width=".8"/>
 <rect x="7.5" y="10.5" width="7" height="4" fill="#5090D0"/>
</svg>
<svg style="left:97px;top:777px" width="17" height="15" viewBox="0 0 17 15">
 <rect x="0.5" y="0.5" width="16" height="11" fill="#D8D8D8" stroke="#707070" stroke-width=".8"/>
 <rect x="2" y="2" width="13" height="8" fill="#2060C0"/>
 <rect x="2" y="7" width="13" height="3" fill="#1848A0"/>
 <rect x="5" y="12" width="7" height="2.5" fill="#909090"/>
</svg>
<svg style="left:121px;top:776px" width="17" height="17" viewBox="0 0 17 17">
 <circle cx="8.5" cy="9" r="6" fill="none" stroke="#2878D0" stroke-width="2.6"/>
 <path d="M4 9.5 L13 9.5" stroke="#2878D0" stroke-width="2"/>
 <path d="M1 14 C3 6 11 1 16 2 C13 3 6 8 3 15Z" fill="#F0B020"/>
</svg>
<div class="vl" style="left:169px;top:775px;height:20px;background:#808080"></div>
<div class="vl" style="left:170px;top:775px;height:20px;background:#fff"></div>
<div class="a" style="left:176px;top:774px;width:160px;height:22px;border:1px solid;border-color:#404040 #fff #fff #404040;box-shadow:inset 1px 1px 0 #808080;background-color:#E4E4E4;background-image:repeating-conic-gradient(#FFFFFF 0 25%,#D4D4D4 0 50%);background-size:2px 2px"></div>
<svg style="left:180px;top:777px" width="15" height="16" viewBox="0 0 15 16">
 <rect x="3.5" y="1.5" width="11" height="14" fill="#E4E8F4" stroke="#505050" stroke-width="1"/>
 <path d="M1 3.5h3M1 5.5h3M1 7.5h3M1 9.5h3M1 11.5h3M1 13.5h3" stroke="#505050" stroke-width="1"/>
 <path d="M4 4.5h10M4 6.5h10M4 10.5h10M4 12.5h10" stroke="#98A8D0" stroke-width="1"/>
 <path d="M9 2 L13.5 9 L4.5 9 Z" fill="#E0D068"/>
 <rect x="8.5" y="4" width="1.2" height="4" fill="#303020"/>
 <circle cx="8" cy="12" r="2.6" fill="#B83838"/>
 <circle cx="8" cy="12" r="1" fill="#F0B0B0"/>
</svg>
<div class="t" style="left:201px;top:780px;font-size:12px;font-weight:bold;line-height:13px">Event Viewer</div>
<!-- tray -->
<div class="a" style="left:918px;top:773px;width:108px;height:22px;border:1px solid;border-color:#808080 #fff #fff #808080"></div>
<svg style="left:932px;top:776px" width="18" height="17" viewBox="0 0 18 17">
 <rect x="4" y="0.5" width="10" height="8" fill="#5880C0" stroke="#284878" stroke-width=".8"/>
 <rect x="0.5" y="5" width="10" height="8" fill="#3868B0" stroke="#183060" stroke-width=".8"/>
 <circle cx="12" cy="12" r="4.5" fill="#20A0A0"/>
 <path d="M9 11 C11 9 13 10 15 12" stroke="#80E080" stroke-width="1.2" fill="none"/>
</svg>
<svg style="left:951px;top:776px" width="18" height="17" viewBox="0 0 18 17">
 <path d="M0.5 5 L4 5 L9 0.5 L9 15.5 L4 11 L0.5 11Z" fill="#F0F0F0" stroke="#808080" stroke-width=".8"/>
 <circle cx="13" cy="12" r="4.2" fill="#E03030"/>
 <path d="M11 10 L15 14 M15 10 L11 14" stroke="#fff" stroke-width="1.2"/>
</svg>
<div class="t" style="left:974px;top:779px;font-size:11px">3:24 PM</div>
</div></body></html>
